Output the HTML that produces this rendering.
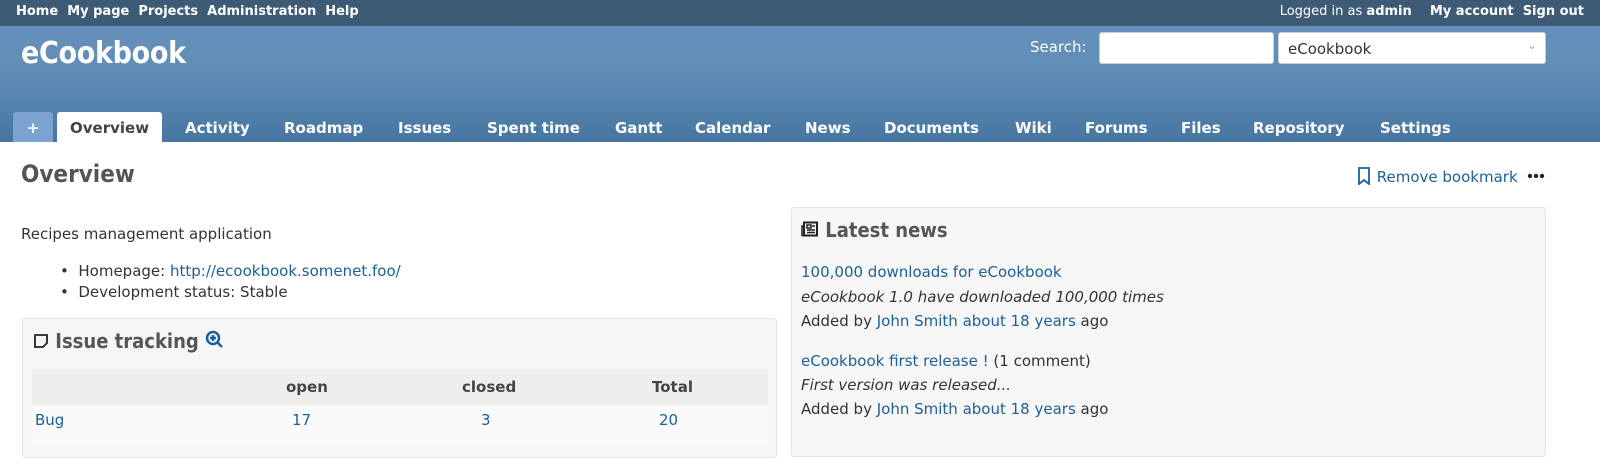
<!DOCTYPE html>
<html><head><meta charset="utf-8"><style>
*{box-sizing:border-box;margin:0;padding:0}
body{width:1600px;height:439px;overflow:hidden;background:#fff;font-family:"DejaVu Sans","Liberation Sans",sans-serif;font-size:15px;color:#333}
a{color:#1d6199;text-decoration:none}
#top{height:26px;background:#3e5b76;color:#fff;font-size:13px;font-weight:bold;position:relative}
#top .l{position:absolute;left:16px;top:4px;word-spacing:0}
#top .l span{margin-right:9px}
#top .r{position:absolute;right:16px;top:4px}
#hdr{height:116px;background:linear-gradient(#6690bb 0%,#5f8db6 40%,#4676a1 100%);position:relative}
#hdr h1{position:absolute;left:21px;top:10px;color:#fff;font-size:30px;font-weight:bold;font-family:"DejaVu Sans Condensed","DejaVu Sans",sans-serif;letter-spacing:-0.3px}
#srch{position:absolute;left:1030px;top:12px;color:#fff;font-size:15px}
.inp{position:absolute;background:#fff;border:1px solid #ccc;border-radius:3px;height:32px}
#tabs{position:absolute;left:13px;top:86px;height:30px}
#tabs span{position:absolute;top:0;height:30px;line-height:32px;color:#fff;font-weight:bold;font-size:15px;white-space:nowrap}
#tabs .sel{background:#fff;color:#444;border-radius:3px 3px 0 0;padding:0 13px}
#tabs .plus{background:#7aa3d2;border-radius:3px 3px 0 0;width:40px;text-align:center}
h2{position:absolute;left:21px;top:160px;font-size:24px;color:#555;font-weight:bold;font-family:"DejaVu Sans Condensed","DejaVu Sans",sans-serif}
.box{position:absolute;background:#f6f6f6;border:1px solid #e4e4e4;border-radius:3px}
h3{font-size:20px;color:#555;font-weight:bold;font-family:"DejaVu Sans Condensed","DejaVu Sans",sans-serif}
.t{position:absolute;white-space:nowrap}
</style></head><body>
<div id="top"><div class="l"><span>Home</span><span>My page</span><span>Projects</span><span>Administration</span><span>Help</span></div>
<div class="r"><span style="font-weight:normal">Logged in as </span>admin&nbsp;&nbsp;&nbsp; My account&nbsp; Sign out</div></div>
<div id="hdr"><h1>eCookbook</h1>
<div id="srch">Search:</div>
<div class="inp" style="left:1099px;top:6px;width:175px"></div>
<div class="inp" style="left:1278px;top:6px;width:268px;padding:7px 9px;font-size:15px;color:#333">eCookbook<span style="position:absolute;right:8px;top:5px;color:#aaa;font-size:12px">&#8964;</span></div>
<div id="tabs">
<span class="plus" style="left:0">+</span>
<span class="sel" style="left:44px">Overview</span>
<span style="left:172px">Activity</span>
<span style="left:271px">Roadmap</span>
<span style="left:385px">Issues</span>
<span style="left:474px">Spent time</span>
<span style="left:602px">Gantt</span>
<span style="left:682px">Calendar</span>
<span style="left:792px">News</span>
<span style="left:871px">Documents</span>
<span style="left:1002px">Wiki</span>
<span style="left:1072px">Forums</span>
<span style="left:1168px">Files</span>
<span style="left:1240px">Repository</span>
<span style="left:1367px">Settings</span>
</div></div>
<h2>Overview</h2>
<div class="t" style="left:1356px;top:167px;color:#1d6199"><svg width="16" height="18" viewBox="0 0 16 18" style="vertical-align:-3px"><path d="M3 1h10v16l-5-4-5 4z" fill="none" stroke="#1d6199" stroke-width="1.8"/></svg> Remove bookmark</div>
<svg class="t" style="left:1527px;top:173px" width="20" height="6" viewBox="0 0 20 6"><circle cx="3" cy="3" r="2.2" fill="#222"/><circle cx="9" cy="3" r="2.2" fill="#222"/><circle cx="15" cy="3" r="2.2" fill="#222"/></svg>
<div class="t" style="left:21px;top:225px">Recipes management application</div>
<div class="t" style="left:60px;top:262px">&bull;&nbsp; Homepage: <a>http://ecookbook.somenet.foo/</a></div>
<div class="t" style="left:60px;top:283px">&bull;&nbsp; Development status: Stable</div>
<div class="box" style="left:22px;top:318px;width:755px;height:140px">
<h3 class="t" style="left:10px;top:10px"><svg width="16" height="16" viewBox="0 0 16 16" style="vertical-align:-1px"><path d="M2 2h12v8l-4 4H2z" fill="none" stroke="#222" stroke-width="1.8"/></svg> Issue tracking <svg width="20" height="20" viewBox="0 0 20 20" style="vertical-align:-2px"><circle cx="8" cy="8" r="6" fill="none" stroke="#1d6199" stroke-width="2.5"/><path d="M12 12l5 5M5 8h6M8 5v6" stroke="#1d6199" stroke-width="2.5"/></svg></h3>
<div style="position:absolute;left:9px;top:50px;width:736px;height:36px;background:#eee;border-radius:3px 3px 0 0"></div>
<div style="position:absolute;left:9px;top:86px;width:736px;height:40px;background:#fafafa"></div>
<div class="t" style="left:263px;top:59px;font-weight:bold;color:#444">open</div>
<div class="t" style="left:439px;top:59px;font-weight:bold;color:#444">closed</div>
<div class="t" style="left:629px;top:59px;font-weight:bold;color:#444">Total</div>
<a class="t" style="left:12px;top:92px">Bug</a>
<a class="t" style="left:269px;top:92px">17</a>
<a class="t" style="left:458px;top:92px">3</a>
<a class="t" style="left:636px;top:92px">20</a>
</div>
<div class="box" style="left:791px;top:207px;width:755px;height:250px">
<h3 class="t" style="left:9px;top:10px"><svg width="18" height="17" viewBox="0 0 18 17" style="vertical-align:-1px"><rect x="3" y="1.5" width="13" height="13" fill="none" stroke="#222" stroke-width="2"/><path d="M3 5H1v9.5h2M6 4h4v3H6zM11 5h3M6 9h8M6 11.5h8" stroke="#222" stroke-width="1.5" fill="none"/></svg> Latest news</h3>
<a class="t" style="left:9px;top:55px">100,000 downloads for eCookbook</a>
<div class="t" style="left:9px;top:80px;font-style:italic">eCookbook 1.0 have downloaded 100,000 times</div>
<div class="t" style="left:9px;top:104px">Added by <a>John Smith</a> <a>about 18 years</a> ago</div>
<div class="t" style="left:9px;top:144px"><a>eCookbook first release !</a> (1 comment)</div>
<div class="t" style="left:9px;top:168px;font-style:italic">First version was released...</div>
<div class="t" style="left:9px;top:192px">Added by <a>John Smith</a> <a>about 18 years</a> ago</div>
</div>
</body></html>
